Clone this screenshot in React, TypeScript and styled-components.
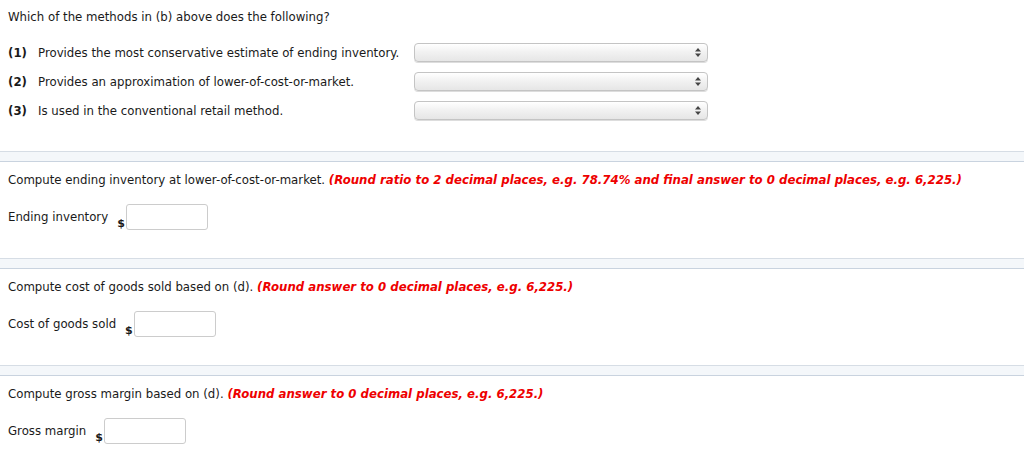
import styled, { createGlobalStyle } from "styled-components";

const GlobalStyle = createGlobalStyle`
  body {
    margin: 0;
    background: #ffffff;
    font-family: Verdana, "DejaVu Sans", sans-serif;
    font-size: 11.75px;
    color: #1a1a1a;
  }
`;

const questions = [
  "Provides the most conservative estimate of ending inventory.",
  "Provides an approximation of lower-of-cost-or-market.",
  "Is used in the conventional retail method.",
];

const answers = [
  {
    prompt: "Compute ending inventory at lower-of-cost-or-market.",
    hint: "(Round ratio to 2 decimal places, e.g. 78.74% and final answer to 0 decimal places, e.g. 6,225.)",
    label: "Ending inventory",
  },
  {
    prompt: "Compute cost of goods sold based on (d).",
    hint: "(Round answer to 0 decimal places, e.g. 6,225.)",
    label: "Cost of goods sold",
  },
  {
    prompt: "Compute gross margin based on (d).",
    hint: "(Round answer to 0 decimal places, e.g. 6,225.)",
    label: "Gross margin",
  },
];

export default function App() {
  return (
    <>
      <GlobalStyle />
      <Page>
        <QuestionBlock>
          <Prompt>Which of the methods in (b) above does the following?</Prompt>
          <MatchList>
            {questions.map((q, i) => (
              <MatchRow key={i}>
                <Num>({i + 1})</Num>
                <MatchText>{q}</MatchText>
                <SelectBox>
                  <Picker defaultValue="">
                    <option value=""></option>
                  </Picker>
                  <Arrows width="6" height="9" viewBox="0 0 6 9">
                    <path d="M3 0 L6 3.5 L0 3.5 Z" fill="#444" />
                    <path d="M3 9 L6 5.5 L0 5.5 Z" fill="#444" />
                  </Arrows>
                </SelectBox>
              </MatchRow>
            ))}
          </MatchList>
        </QuestionBlock>
        {answers.map((a, i) => (
          <div key={i}>
            <Divider />
            <Section>
              <Prompt>
                {a.prompt} <Hint>{a.hint}</Hint>
              </Prompt>
              <AnswerRow>
                <AnswerLabel>{a.label}</AnswerLabel>
                <Dollar>$</Dollar>
                <AmountInput type="text" />
              </AnswerRow>
            </Section>
          </div>
        ))}
      </Page>
    </>
  );
}

const Page = styled.div`
  width: 1024px;
`;

const QuestionBlock = styled.div`
  padding: 10px 8px 31px;
`;

const Prompt = styled.div`
  line-height: 14px;
  white-space: nowrap;
`;

const Hint = styled.span`
  color: #ee0000;
  font-weight: bold;
  font-style: italic;
`;

const MatchList = styled.div`
  margin-top: 19px;
  display: flex;
  flex-direction: column;
  gap: 10px;
`;

const MatchRow = styled.div`
  display: grid;
  grid-template-columns: 30px 376px 294px;
  align-items: center;
  height: 19px;
`;

const Num = styled.span`
  font-weight: bold;
`;

const MatchText = styled.span`
  white-space: nowrap;
`;

const SelectBox = styled.div`
  position: relative;
  height: 19px;
`;

const Picker = styled.select`
  appearance: none;
  width: 100%;
  height: 19px;
  margin: 0;
  border: 1px solid #c4c4c4;
  border-radius: 4px;
  background: linear-gradient(#ffffff, #f2f2f2 45%, #e6e6e6);
  box-shadow: 0 1px 0 #dddddd;
  font: inherit;
`;

const Arrows = styled.svg`
  position: absolute;
  right: 7px;
  top: 5px;
  pointer-events: none;
`;

const Divider = styled.div`
  height: 9px;
  border-top: 1px solid #d6dde5;
  border-bottom: 1px solid #c9d3df;
  background: #f4f7fa;
`;

const Section = styled.div`
  padding: 11px 8px 28px;
`;

const AnswerRow = styled.div`
  margin-top: 17px;
  display: flex;
  align-items: center;
`;

const AnswerLabel = styled.span`
  line-height: 14px;
`;

const Dollar = styled.span`
  margin-left: 9px;
  font-weight: bold;
  font-size: 11px;
  position: relative;
  top: 6px;
  width: 9px;
`;

const AmountInput = styled.input`
  width: 82px;
  height: 26px;
  box-sizing: border-box;
  margin: 0;
  border: 1px solid #cccccc;
  border-radius: 3px;
  background: #ffffff;
`;
